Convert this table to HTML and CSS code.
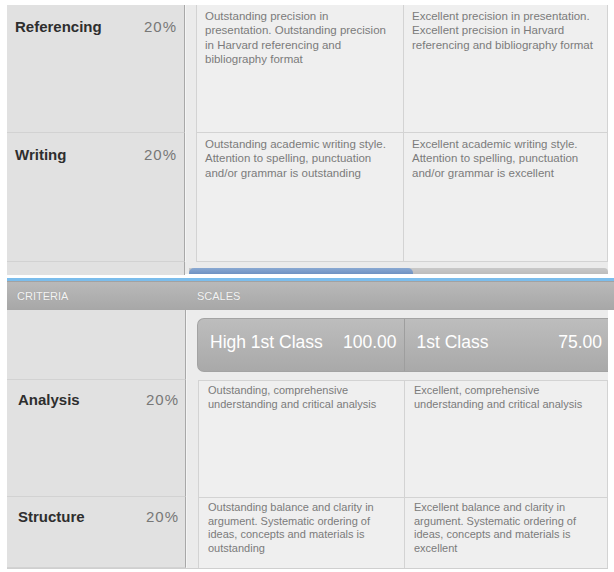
FILE: index.html
```html
<!DOCTYPE html>
<html>
<head>
<meta charset="utf-8">
<link rel="stylesheet" href="styles.css">
</head>
<body>
<div class="sheet">
  <section class="top grid-top">
    <div class="crit"><span class="name">Referencing</span><span class="pct">20%</span></div>
    <div class="gutter"></div>
    <div class="cell">Outstanding precision in presentation. Outstanding precision in Harvard referencing and bibliography format</div>
    <div class="cell last">Excellent precision in presentation. Excellent precision in Harvard referencing and bibliography format</div>

    <div class="crit"><span class="name">Writing</span><span class="pct">20%</span></div>
    <div class="gutter"></div>
    <div class="cell">Outstanding academic writing style. Attention to spelling, punctuation and/or grammar is outstanding</div>
    <div class="cell last">Excellent academic writing style. Attention to spelling, punctuation and/or grammar is excellent</div>

    <div class="crit tail"></div>
    <div class="scrollrow"><div class="track"><div class="thumb"></div></div></div>
  </section>

  <div class="gap"></div>
  <div class="blue"></div>
  <header class="hdr">
    <span class="h-crit">CRITERIA</span>
    <span class="h-scale">SCALES</span>
  </header>

  <section class="grid-bottom">
    <div class="crit head"></div>
    <div class="scalerow">
      <div class="scalebox">
        <div class="scale"><span>High 1st Class</span><span>100.00</span></div>
        <div class="scale second"><span>1st Class</span><span>75.00</span></div>
      </div>
    </div>

    <div class="crit b"><span class="name">Analysis</span><span class="pct">20%</span></div>
    <div class="gutter"></div>
    <div class="cell small">Outstanding, comprehensive understanding and critical analysis</div>
    <div class="cell small last">Excellent, comprehensive understanding and critical analysis</div>

    <div class="crit b"><span class="name">Structure</span><span class="pct">20%</span></div>
    <div class="gutter"></div>
    <div class="cell small">Outstanding balance and clarity in argument. Systematic ordering of ideas, concepts and materials is outstanding</div>
    <div class="cell small last">Excellent balance and clarity in argument. Systematic ordering of ideas, concepts and materials is excellent</div>
  </section>
</div>
</body>
</html>
```

FILE: styles.css
```css
* { box-sizing: border-box; }
html, body { margin: 0; padding: 0; background: #ffffff; }
body { font-family: "Liberation Sans", Arial, Helvetica, sans-serif; }

.sheet { width: 614px; height: 572px; overflow: hidden; }

.grid-top {
  margin: 5px 0 0 7px;
  width: 601px;
  display: grid;
  grid-template-columns: 178px 11px 207px 205px;
  grid-template-rows: 128px 129px 12px;
}

.grid-bottom {
  margin-left: 7px;
  width: 601px;
  display: grid;
  grid-template-columns: 179px 12px 206px 204px;
  grid-template-rows: 70px 117px 71px;
  border-bottom: 1px solid #cfcfcf;
}

.crit {
  background: #e1e1e1;
  border-right: 1px solid #a8a8a8;
  border-bottom: 1px solid #d2d2d2;
  display: flex;
  justify-content: space-between;
  align-items: flex-start;
  padding: 13px 7px 0 8px;
  line-height: 18px;
}
.crit.tail { border-bottom: none; }
.crit.head { border-bottom: 1px solid #d2d2d2; }
.crit.b { padding: 11px 6px 0 11px; }
.grid-bottom .crit:last-of-type { border-bottom: none; }

.name { font-size: 15px; font-weight: bold; color: #2e2e2e; }
.pct { font-size: 15px; color: #777777; letter-spacing: 1px; }

.gutter {
  background: #ebebeb;
  border-left: 1px solid #f4f4f4;
}

.cell {
  background: #efefef;
  border-left: 1px solid #d3d3d3;
  border-bottom: 1px solid #d3d3d3;
  padding: 4px 8px 0 8px;
  font-size: 11.5px;
  line-height: 14.3px;
  color: #7b7b7b;
}
.cell.last { border-right: 1px solid #d3d3d3; }

.grid-bottom .cell {
  border-top: 1px solid #d3d3d3;
  border-bottom: none;
  padding: 3px 8px 0 9px;
  font-size: 11px;
  line-height: 13.5px;
}

.scrollrow {
  grid-column: 2 / 5;
  background: #ebebeb;
  display: flex;
  align-items: flex-end;
  padding-left: 4px;
}
.track {
  width: 100%;
  height: 6px;
  background: linear-gradient(#c9c9c9, #bdbdbd);
  border-radius: 0 4px 0 0;
}
.thumb {
  width: 224px;
  height: 6px;
  background: linear-gradient(#8aa9d2, #6f92c2);
  border-radius: 5px 5px 0 0;
}

.gap { height: 4px; }
.blue { margin-left: 7px; height: 3px; background: #7bbdec; }
.hdr {
  margin-left: 7px;
  height: 29px;
  background: linear-gradient(#b9b9b9, #a7a7a7);
  border-top: 1px solid #a2a2a2;
  display: flex;
  align-items: center;
  font-size: 11px;
  color: #f4f4f4;
  text-shadow: 0 0 1px rgba(0,0,0,0.15);
}
.h-crit { width: 190px; padding-left: 10px; }
.h-scale { }

.scalerow {
  grid-column: 2 / 5;
  background: #ececec;
  padding: 8px 0 0 10px;
  border-left: 1px solid #f4f4f4;
}
.scalebox {
  height: 54px;
  display: flex;
  border: 1px solid #a3a3a3;
  border-right: none;
  border-radius: 7px 0 0 7px;
  background: linear-gradient(#bdbdbd, #a9a9a9);
  overflow: hidden;
}
.scale {
  display: flex;
  justify-content: space-between;
  align-items: center;
  width: 206px;
  padding: 0 7px 0 12px;
  font-size: 17.5px;
  color: #ffffff;
  padding-bottom: 5px;
}
.scale.second {
  width: 205px;
  border-left: 1px solid #9e9e9e;
  padding: 0 6px 5px 12px;
}
```
